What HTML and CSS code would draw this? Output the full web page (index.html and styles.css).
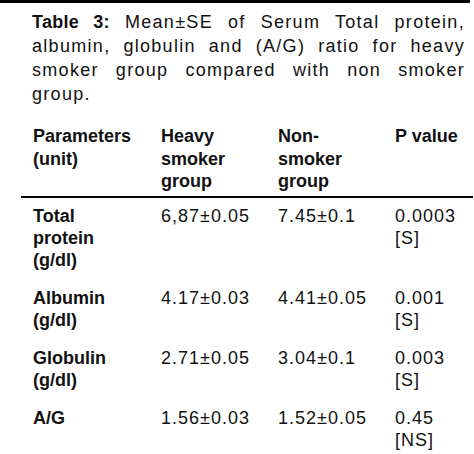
FILE: index.html
```html
<!DOCTYPE html>
<html>
<head>
<meta charset="utf-8">
<link rel="stylesheet" href="styles.css">
</head>
<body>
<div class="topbar"></div>
<div class="caption">
  <span class="cline"><b class="tlabel">Table 3:</b> Mean±SE of Serum Total protein,</span>
  <span class="cline">albumin, globulin and (A/G) ratio for heavy</span>
  <span class="cline">smoker group compared with non smoker</span>
  <span class="cline last">group.</span>
</div>
<table class="data">
  <thead>
    <tr>
      <th class="c1">Parameters<br>(unit)</th>
      <th class="c2">Heavy<br>smoker<br>group</th>
      <th class="c3">Non-<br>smoker<br>group</th>
      <th class="c4">P value</th>
    </tr>
  </thead>
  <tbody>
    <tr>
      <td class="lab">Total<br>protein<br>(g/dl)</td>
      <td>6,87±0.05</td>
      <td>7.45±0.1</td>
      <td>0.0003<br>[S]</td>
    </tr>
    <tr>
      <td class="lab">Albumin<br>(g/dl)</td>
      <td>4.17±0.03</td>
      <td>4.41±0.05</td>
      <td>0.001<br>[S]</td>
    </tr>
    <tr>
      <td class="lab">Globulin<br>(g/dl)</td>
      <td>2.71±0.05</td>
      <td>3.04±0.1</td>
      <td>0.003<br>[S]</td>
    </tr>
    <tr>
      <td class="lab">A/G</td>
      <td>1.56±0.03</td>
      <td>1.52±0.05</td>
      <td>0.45<br>[NS]</td>
    </tr>
  </tbody>
</table>
</body>
</html>
```
FILE: styles.css
```css
html, body {
  margin: 0;
  padding: 0;
  background: #fff;
}
body {
  font-family: "Liberation Sans", Arial, sans-serif;
  color: #111;
}
.topbar {
  width: 470px;
  height: 3px;
  background: #000;
}
.caption {
  margin: 7px 0 0 32px;
  width: 433px;
  font-size: 18px;
  line-height: 24px;
  letter-spacing: 1.3px;
}
.tlabel {
  letter-spacing: 0.3px;
}
.cline {
  display: block;
  text-align: justify;
  text-align-last: justify;
}
.cline.last {
  text-align-last: left;
}
.data {
  margin: 12px 0 0 21px;
  width: 452px;
  border-collapse: collapse;
  table-layout: fixed;
  font-size: 18px;
  line-height: 22px;
}
.data th {
  text-align: left;
  vertical-align: top;
  font-weight: bold;
  padding: 7px 0 3px 12px;
  line-height: 22.5px;
  border-bottom: 2px solid #000;
}
.c1 { width: 116px; }
.c2 { width: 105px; }
.c3 { width: 105px; }
.c4 { width: 78px; }
.data td {
  vertical-align: top;
  padding: 7px 0 9px 12px;
  letter-spacing: 1px;
}
.data td.lab {
  font-weight: bold;
  letter-spacing: 0;
}
```
